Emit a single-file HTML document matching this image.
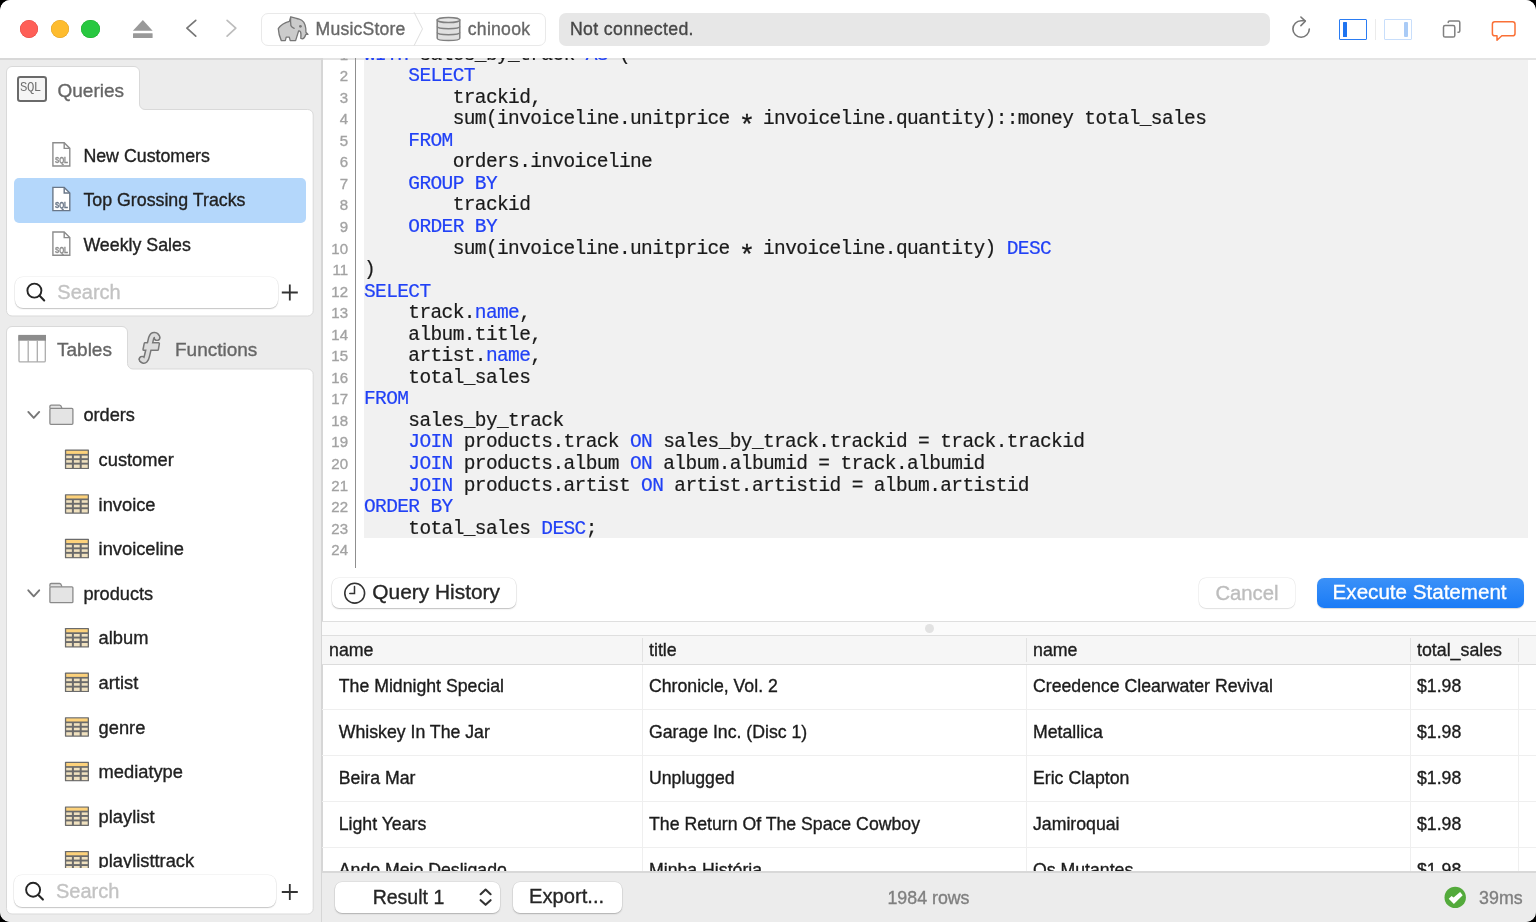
<!DOCTYPE html>
<html><head><meta charset="utf-8">
<style>
*{margin:0;padding:0;box-sizing:border-box}
html,body{width:1536px;height:922px;overflow:hidden;background:#000}
body{font-family:"Liberation Sans",sans-serif;position:relative}
.a{position:absolute}
svg.a{overflow:visible}
#win{position:absolute;left:0;top:0;width:1536px;height:922px;background:#fff;border-radius:10.5px;overflow:hidden;will-change:transform}
.t{position:absolute;white-space:nowrap;line-height:30px;height:30px;-webkit-text-stroke:0.35px currentColor}
.m{position:absolute;white-space:pre;line-height:30px;height:30px;font-family:"Liberation Mono",monospace;-webkit-text-stroke:0.2px currentColor}
.kw{color:#2141f6}
.ast{display:inline-block;transform:translateY(7.5px) scale(1.4)}
</style></head><body>
<div id="win">
<div class="a" style="left:0px;top:0px;width:1536px;height:58px;background:#fff"></div>
<div class="a" style="left:0px;top:58px;width:322px;height:2px;background:#d8d8d8"></div>
<div class="a" style="left:322px;top:58px;width:1214px;height:2px;background:#e6e6e6"></div>
<div class="a" style="left:20.10px;top:19.80px;width:18.4px;height:18.4px;border-radius:50%;background:#fe5f57;box-shadow:inset 0 0 0 0.5px #e14640"></div>
<div class="a" style="left:50.80px;top:19.80px;width:18.4px;height:18.4px;border-radius:50%;background:#febc2e;box-shadow:inset 0 0 0 0.5px #dfa023"></div>
<div class="a" style="left:81.40px;top:19.80px;width:18.4px;height:18.4px;border-radius:50%;background:#28c840;box-shadow:inset 0 0 0 0.5px #1aab29"></div>
<svg class="a" style="left:128px;top:15px" width="30" height="30" viewBox="128 15 30 30"><path d="M142.85 20 L152.6 30.7 L132.9 30.7 Z" fill="#999"/><rect x="133" y="33.3" width="19.6" height="4.8" rx="0.5" fill="#999"/></svg>
<svg class="a" style="left:180px;top:15px" width="60" height="30" viewBox="180 15 60 30"><path d="M195.75 20.3 L186.9 28.2 L195.75 36.2" fill="none" stroke="#777" stroke-width="1.7" stroke-linecap="round" stroke-linejoin="round"/><path d="M227.1 20.3 L235.8 28.2 L227.1 36.2" fill="none" stroke="#bdbdbd" stroke-width="1.7" stroke-linecap="round" stroke-linejoin="round"/></svg>
<div class="a" style="left:261px;top:12.5px;width:285px;height:33.0px;border:1px solid #e9e9e9;border-radius:7px;background:#fff"></div>
<svg class="a" style="left:270px;top:10px" width="45" height="35" viewBox="270 10 45 35"><path d="M278.3 28.6 C280.5 25.2 285 22.6 289.4 21.4 L290.7 16.9 C294 17.6 296.5 18.6 299.2 19.2 C303 20.2 305.2 24 305.8 28.5 L305.9 32.2 L308 34.4 L305.9 34.2 C305.2 36.3 304.2 38.3 302.6 38.8 L300.8 38.3 C301.1 35.6 301.2 33.2 300.4 31.6 C299.9 31 299.2 30.9 298.6 31 L295.6 40.6 L290.2 40.6 L289.3 37.2 L286.2 37.2 L285.3 40.6 L281.3 40.6 C279.6 37 278.5 33 278.3 28.6 Z" fill="#cbcbcb" stroke="#777" stroke-width="1.3" stroke-linejoin="round"/><path d="M290.7 17.2 C290.3 20.5 290.6 23.5 290.9 25.6 C291.5 26.8 292.8 27.8 294.2 28.3" fill="none" stroke="#777" stroke-width="1.3" stroke-linecap="round"/><circle cx="300.4" cy="26.3" r="1.35" fill="#777"/></svg>
<div class="t " style="left:315.60px;top:14.10px;font-size:17.6px;color:#686868;letter-spacing:0.186px;">MusicStore</div>
<svg class="a" style="left:410px;top:10px" width="20" height="40" viewBox="410 10 20 40"><path d="M414.1 12.3 L422.5 28.9 L414.1 45.6" fill="none" stroke="#dedede" stroke-width="1"/></svg>
<svg class="a" style="left:430px;top:12px" width="36" height="34" viewBox="430 12 36 34"><path d="M437.2 20 L437.2 38.2 C437.2 41.2 459.8 41.2 459.8 38.2 L459.8 20 Z" fill="#e0e0e0" stroke="#808080" stroke-width="1.5"/><ellipse cx="448.5" cy="20" rx="11.3" ry="2.6" fill="#e6e6e6" stroke="#808080" stroke-width="1.5"/><path d="M437.2 26.6 C437.2 29.4 459.8 29.4 459.8 26.6" fill="none" stroke="#808080" stroke-width="1.5"/><path d="M437.2 32.6 C437.2 35.4 459.8 35.4 459.8 32.6" fill="none" stroke="#808080" stroke-width="1.5"/></svg>
<div class="t " style="left:467.80px;top:14.10px;font-size:17.6px;color:#686868;letter-spacing:0.256px;">chinook</div>
<div class="a" style="left:559px;top:12.5px;width:711px;height:33.0px;background:#e7e7e7;border-radius:7px"></div>
<div class="t " style="left:570.00px;top:14.07px;font-size:17.7px;color:#474747;letter-spacing:0.349px;">Not connected.</div>
<svg class="a" style="left:1288px;top:14px" width="26" height="26" viewBox="1288 14 26 26"><path d="M1309.3 29 A8.2 8.2 0 1 1 1301.1 20.8 L1305 20.8" fill="none" stroke="#777" stroke-width="1.6" stroke-linecap="round"/><path d="M1300.9 17 L1305.3 21.2 L1300.9 25.6" fill="none" stroke="#777" stroke-width="1.6" stroke-linecap="round" stroke-linejoin="round"/></svg>
<div class="a" style="left:1339.2px;top:18.6px;width:27.799999999999955px;height:21.299999999999997px;border:1.8px solid #2a7cf3;border-radius:1px"></div>
<div class="a" style="left:1342.9px;top:21.7px;width:4.099999999999909px;height:15.000000000000004px;background:#1f74f0;border-radius:0.5px"></div>
<div class="a" style="left:1375px;top:18.5px;width:1px;height:21.5px;background:#ebebeb"></div>
<div class="a" style="left:1384.2px;top:18.6px;width:27.5px;height:21.299999999999997px;border:1.8px solid #c8defb;border-radius:1px"></div>
<div class="a" style="left:1404.2px;top:21.7px;width:4.0px;height:15.000000000000004px;background:#aacbf6;border-radius:1px"></div>
<svg class="a" style="left:1438px;top:16px" width="28" height="26" viewBox="1438 16 28 26"><rect x="1443.5" y="25.6" width="11.3" height="11.4" rx="1.6" fill="none" stroke="#808080" stroke-width="1.5"/><path d="M1448.2 22.4 L1448.2 22.2 C1448.2 21.4 1448.8 21 1449.6 21 L1458.4 21 C1459.3 21 1459.8 21.5 1459.8 22.4 L1459.8 31 C1459.8 31.8 1459.3 32.3 1458.4 32.3 L1458 32.3" fill="none" stroke="#808080" stroke-width="1.5" stroke-linecap="round"/></svg>
<svg class="a" style="left:1488px;top:16px" width="32" height="28" viewBox="1488 16 32 28"><path d="M1494.8 21.8 L1512.6 21.8 C1514 21.8 1515 22.8 1515 24.2 L1515 33.4 C1515 34.8 1514 35.8 1512.6 35.8 L1501.8 35.8 L1497 40.2 L1497 35.8 L1494.8 35.8 C1493.4 35.8 1492.4 34.8 1492.4 33.4 L1492.4 24.2 C1492.4 22.8 1493.4 21.8 1494.8 21.8 Z" fill="none" stroke="#fa7036" stroke-width="1.5" stroke-linejoin="round"/></svg>
<div class="a" style="left:0px;top:60px;width:321px;height:862px;background:#ececec"></div>
<div class="a" style="left:321px;top:58px;width:1.6000000000000227px;height:864px;background:#d6d6d6"></div>
<svg class="a" style="left:0px;top:64px" width="322" height="253" viewBox="0 64 322 253"><path d="M6.5 72.0 A5.5 5.5 0 0 1 12.0 66.5 L134.0 66.5 A5.5 5.5 0 0 1 139.5 72.0 L139.5 104.0 A5.5 5.5 0 0 0 145.0 109.5 L307.7 109.5 A5.5 5.5 0 0 1 313.2 115.0 L313.2 310.5 A5.5 5.5 0 0 1 307.7 316 L12.0 316 A5.5 5.5 0 0 1 6.5 310.5 Z" fill="#fff" stroke="#d9d9d9" stroke-width="1"/></svg>
<div class="a" style="left:17.2px;top:75.8px;width:30.000000000000004px;height:26.400000000000006px;border:2.2px solid #6a6a6a;border-radius:3.2px;background:#f5f5f5"></div>
<div class="a" style="left:20px;top:81px;width:22px;height:14px;font-family:'Liberation Mono',monospace;font-size:13px;line-height:14px;color:#707070;transform:scaleX(0.95);transform-origin:left top;letter-spacing:-0.5px">SQL</div>
<div class="t " style="left:57.50px;top:75.92px;font-size:19px;color:#666;">Queries</div>
<div class="a" style="left:13.8px;top:178px;width:292.09999999999997px;height:44.599999999999994px;background:#b4d7fb;border-radius:5px"></div>
<svg class="a" style="left:48px;top:139px" width="26" height="30" viewBox="48 139 26 30"><path d="M52.9 142.79999999999998 L64.2 142.79999999999998 L69.8 148.39999999999998 L69.8 166.0 L52.9 166.0 Z" fill="#fff" stroke="#8c8c8c" stroke-width="1.4"/><path d="M64.2 142.79999999999998 L64.2 148.39999999999998 L69.8 148.39999999999998" fill="none" stroke="#8c8c8c" stroke-width="1.4"/></svg>
<div class="a" style="left:55px;top:156.40px;width:16px;height:8px;font-family:'Liberation Sans',sans-serif;font-weight:bold;font-size:8.6px;line-height:8px;color:#8c8c8c;transform:scaleX(0.74);transform-origin:left top;letter-spacing:-0.1px;-webkit-text-stroke:0.35px #8c8c8c">SQL</div>
<div class="t " style="left:83.40px;top:140.83px;font-size:17.8px;color:#222;">New Customers</div>
<svg class="a" style="left:48px;top:183px" width="26" height="30" viewBox="48 183 26 30"><path d="M52.9 187.39999999999998 L64.2 187.39999999999998 L69.8 192.99999999999997 L69.8 210.6 L52.9 210.6 Z" fill="#fff" stroke="#6a7788" stroke-width="1.4"/><path d="M64.2 187.39999999999998 L64.2 192.99999999999997 L69.8 192.99999999999997" fill="none" stroke="#6a7788" stroke-width="1.4"/></svg>
<div class="a" style="left:55px;top:201.00px;width:16px;height:8px;font-family:'Liberation Sans',sans-serif;font-weight:bold;font-size:8.6px;line-height:8px;color:#6a7788;transform:scaleX(0.74);transform-origin:left top;letter-spacing:-0.1px;-webkit-text-stroke:0.35px #6a7788">SQL</div>
<div class="t " style="left:83.40px;top:185.43px;font-size:17.8px;color:#222;">Top Grossing Tracks</div>
<svg class="a" style="left:48px;top:228px" width="26" height="30" viewBox="48 228 26 30"><path d="M52.9 231.99999999999997 L64.2 231.99999999999997 L69.8 237.59999999999997 L69.8 255.2 L52.9 255.2 Z" fill="#fff" stroke="#8c8c8c" stroke-width="1.4"/><path d="M64.2 231.99999999999997 L64.2 237.59999999999997 L69.8 237.59999999999997" fill="none" stroke="#8c8c8c" stroke-width="1.4"/></svg>
<div class="a" style="left:55px;top:245.60px;width:16px;height:8px;font-family:'Liberation Sans',sans-serif;font-weight:bold;font-size:8.6px;line-height:8px;color:#8c8c8c;transform:scaleX(0.74);transform-origin:left top;letter-spacing:-0.1px;-webkit-text-stroke:0.35px #8c8c8c">SQL</div>
<div class="t " style="left:83.40px;top:230.03px;font-size:17.8px;color:#222;">Weekly Sales</div>
<div class="a" style="left:15px;top:276.5px;width:263px;height:31.600000000000023px;background:#fff;border-radius:8px;box-shadow:0 0 0 0.5px rgba(0,0,0,0.08),0 1px 1.2px rgba(0,0,0,0.2)"></div>
<svg class="a" style="left:20px;top:279px" width="30" height="26" viewBox="20 279 30 26"><circle cx="34.40" cy="290.60" r="7" fill="none" stroke="#262626" stroke-width="1.9"/><path d="M39.40 295.60 L44.20 300.40" stroke="#262626" stroke-width="2.1" stroke-linecap="round"/></svg>
<div class="t " style="left:57.30px;top:276.67px;font-size:20px;color:#c3c3c3;">Search</div>
<svg class="a" style="left:278px;top:280px" width="24" height="24" viewBox="278 280 24 24"><path d="M289.8 284.5 L289.8 300.5 M281.8 292.5 L297.8 292.5" stroke="#333" stroke-width="1.8"/></svg>
<svg class="a" style="left:0px;top:324px" width="322" height="591" viewBox="0 324 322 591"><path d="M6.5 332.0 A5.5 5.5 0 0 1 12.0 326.5 L122.0 326.5 A5.5 5.5 0 0 1 127.5 332.0 L127.5 363.5 A5.5 5.5 0 0 0 133.0 369 L307.7 369 A5.5 5.5 0 0 1 313.2 374.5 L313.2 908.5 A5.5 5.5 0 0 1 307.7 914 L12.0 914 A5.5 5.5 0 0 1 6.5 908.5 Z" fill="#fff" stroke="#d9d9d9" stroke-width="1"/></svg>
<svg class="a" style="left:14px;top:330px" width="36" height="36" viewBox="14 330 36 36"><rect x="19" y="335.6" width="26.3" height="26.3" rx="1.2" fill="#fff" stroke="#acacac" stroke-width="1.3"/><rect x="18.3" y="334.9" width="27.7" height="5.8" fill="#8c8c8c"/><path d="M28.2 340.6 L28.2 362 M37.3 340.6 L37.3 362" stroke="#acacac" stroke-width="1.3"/></svg>
<div class="t " style="left:57.00px;top:334.72px;font-size:19px;color:#666;">Tables</div>
<svg class="a" style="left:132px;top:326px" width="34" height="42" viewBox="132 326 34 42"><g fill="#777" stroke="#777"><path d="M157 337.6 C156.6 334.6 152.6 333.6 151.2 338 L147 355.8 C146.2 359.6 144.4 362.6 141.9 359.4" fill="none" stroke-width="6.6" stroke-linecap="round"/><circle cx="157" cy="337.6" r="3.5" stroke="none"/><circle cx="142.2" cy="359.2" r="3.5" stroke="none"/><path d="M145 343.6 L158.6 343.6 L157.6 349.4 L143.8 349.4 Z" stroke-width="3" stroke-linejoin="round"/></g><g fill="#dcdcdc" stroke="#dcdcdc"><path d="M157 337.6 C156.6 334.6 152.6 333.6 151.2 338 L147 355.8 C146.2 359.6 144.4 362.6 141.9 359.4" fill="none" stroke-width="3.6" stroke-linecap="round"/><circle cx="157" cy="337.6" r="2" stroke="none"/><circle cx="142.2" cy="359.2" r="2" stroke="none"/><path d="M145 343.6 L158.6 343.6 L157.6 349.4 L143.8 349.4 Z" stroke-width="0.1"/></g></svg>
<div class="t " style="left:175.00px;top:334.72px;font-size:19px;color:#666;">Functions</div>
<div class="a" style="left:0;top:0;width:321px;height:868px;overflow:hidden">
<svg class="a" style="left:22px;top:404px" width="24" height="20" viewBox="22 404 24 20"><path d="M28.3 411.90 L33.75 417.90 L39.2 411.90" fill="none" stroke="#777" stroke-width="1.9" stroke-linecap="round" stroke-linejoin="round"/></svg>
<svg class="a" style="left:44px;top:401px" width="36" height="28" viewBox="44 401 36 28"><path d="M49.9 408.40 L49.9 406.30 C49.9 405.50 50.4 405.10 51.2 405.10 L59.6 405.10 C60.6 405.10 61.2 405.70 61.6 407.50 L61.8 408.40" fill="#e4e4e4" stroke="#8a8a8a" stroke-width="1.3"/><rect x="49.9" y="408.40" width="23" height="15.9" rx="1" fill="#e4e4e4" stroke="#8a8a8a" stroke-width="1.3"/></svg>
<div class="t " style="left:83.40px;top:400.39px;font-size:18.2px;color:#222;">orders</div>
<svg class="a" style="left:60px;top:446px" width="32" height="26" viewBox="60 446 32 26"><rect x="64.90" y="449.60" width="24.1" height="19.5" rx="0.6" fill="#6b6b6b"/><rect x="66.20" y="450.80" width="21.5" height="3.1" fill="#fdd27b"/><rect x="66.20" y="455.60" width="5.70" height="2.60" fill="#f0e1bf"/><rect x="66.20" y="460.10" width="5.70" height="2.60" fill="#f0e1bf"/><rect x="66.20" y="464.60" width="5.70" height="3.30" fill="#f0e1bf"/><rect x="73.90" y="455.60" width="5.80" height="2.60" fill="#f0e1bf"/><rect x="73.90" y="460.10" width="5.80" height="2.60" fill="#f0e1bf"/><rect x="73.90" y="464.60" width="5.80" height="3.30" fill="#f0e1bf"/><rect x="81.70" y="455.60" width="6.00" height="2.60" fill="#f0e1bf"/><rect x="81.70" y="460.10" width="6.00" height="2.60" fill="#f0e1bf"/><rect x="81.70" y="464.60" width="6.00" height="3.30" fill="#f0e1bf"/></svg>
<div class="t " style="left:98.60px;top:444.96px;font-size:18.3px;color:#222;">customer</div>
<svg class="a" style="left:60px;top:491px" width="32" height="26" viewBox="60 491 32 26"><rect x="64.90" y="494.20" width="24.1" height="19.5" rx="0.6" fill="#6b6b6b"/><rect x="66.20" y="495.40" width="21.5" height="3.1" fill="#fdd27b"/><rect x="66.20" y="500.20" width="5.70" height="2.60" fill="#f0e1bf"/><rect x="66.20" y="504.70" width="5.70" height="2.60" fill="#f0e1bf"/><rect x="66.20" y="509.20" width="5.70" height="3.30" fill="#f0e1bf"/><rect x="73.90" y="500.20" width="5.80" height="2.60" fill="#f0e1bf"/><rect x="73.90" y="504.70" width="5.80" height="2.60" fill="#f0e1bf"/><rect x="73.90" y="509.20" width="5.80" height="3.30" fill="#f0e1bf"/><rect x="81.70" y="500.20" width="6.00" height="2.60" fill="#f0e1bf"/><rect x="81.70" y="504.70" width="6.00" height="2.60" fill="#f0e1bf"/><rect x="81.70" y="509.20" width="6.00" height="3.30" fill="#f0e1bf"/></svg>
<div class="t " style="left:98.60px;top:489.56px;font-size:18.3px;color:#222;">invoice</div>
<svg class="a" style="left:60px;top:535px" width="32" height="26" viewBox="60 535 32 26"><rect x="64.90" y="538.80" width="24.1" height="19.5" rx="0.6" fill="#6b6b6b"/><rect x="66.20" y="540.00" width="21.5" height="3.1" fill="#fdd27b"/><rect x="66.20" y="544.80" width="5.70" height="2.60" fill="#f0e1bf"/><rect x="66.20" y="549.30" width="5.70" height="2.60" fill="#f0e1bf"/><rect x="66.20" y="553.80" width="5.70" height="3.30" fill="#f0e1bf"/><rect x="73.90" y="544.80" width="5.80" height="2.60" fill="#f0e1bf"/><rect x="73.90" y="549.30" width="5.80" height="2.60" fill="#f0e1bf"/><rect x="73.90" y="553.80" width="5.80" height="3.30" fill="#f0e1bf"/><rect x="81.70" y="544.80" width="6.00" height="2.60" fill="#f0e1bf"/><rect x="81.70" y="549.30" width="6.00" height="2.60" fill="#f0e1bf"/><rect x="81.70" y="553.80" width="6.00" height="3.30" fill="#f0e1bf"/></svg>
<div class="t " style="left:98.60px;top:534.16px;font-size:18.3px;color:#222;">invoiceline</div>
<svg class="a" style="left:22px;top:583px" width="24" height="20" viewBox="22 583 24 20"><path d="M28.3 590.30 L33.75 596.30 L39.2 590.30" fill="none" stroke="#777" stroke-width="1.9" stroke-linecap="round" stroke-linejoin="round"/></svg>
<svg class="a" style="left:44px;top:579px" width="36" height="28" viewBox="44 579 36 28"><path d="M49.9 586.80 L49.9 584.70 C49.9 583.90 50.4 583.50 51.2 583.50 L59.6 583.50 C60.6 583.50 61.2 584.10 61.6 585.90 L61.8 586.80" fill="#e4e4e4" stroke="#8a8a8a" stroke-width="1.3"/><rect x="49.9" y="586.80" width="23" height="15.9" rx="1" fill="#e4e4e4" stroke="#8a8a8a" stroke-width="1.3"/></svg>
<div class="t " style="left:83.40px;top:578.79px;font-size:18.2px;color:#222;">products</div>
<svg class="a" style="left:60px;top:625px" width="32" height="26" viewBox="60 625 32 26"><rect x="64.90" y="628.00" width="24.1" height="19.5" rx="0.6" fill="#6b6b6b"/><rect x="66.20" y="629.20" width="21.5" height="3.1" fill="#fdd27b"/><rect x="66.20" y="634.00" width="5.70" height="2.60" fill="#f0e1bf"/><rect x="66.20" y="638.50" width="5.70" height="2.60" fill="#f0e1bf"/><rect x="66.20" y="643.00" width="5.70" height="3.30" fill="#f0e1bf"/><rect x="73.90" y="634.00" width="5.80" height="2.60" fill="#f0e1bf"/><rect x="73.90" y="638.50" width="5.80" height="2.60" fill="#f0e1bf"/><rect x="73.90" y="643.00" width="5.80" height="3.30" fill="#f0e1bf"/><rect x="81.70" y="634.00" width="6.00" height="2.60" fill="#f0e1bf"/><rect x="81.70" y="638.50" width="6.00" height="2.60" fill="#f0e1bf"/><rect x="81.70" y="643.00" width="6.00" height="3.30" fill="#f0e1bf"/></svg>
<div class="t " style="left:98.60px;top:623.36px;font-size:18.3px;color:#222;">album</div>
<svg class="a" style="left:60px;top:669px" width="32" height="26" viewBox="60 669 32 26"><rect x="64.90" y="672.60" width="24.1" height="19.5" rx="0.6" fill="#6b6b6b"/><rect x="66.20" y="673.80" width="21.5" height="3.1" fill="#fdd27b"/><rect x="66.20" y="678.60" width="5.70" height="2.60" fill="#f0e1bf"/><rect x="66.20" y="683.10" width="5.70" height="2.60" fill="#f0e1bf"/><rect x="66.20" y="687.60" width="5.70" height="3.30" fill="#f0e1bf"/><rect x="73.90" y="678.60" width="5.80" height="2.60" fill="#f0e1bf"/><rect x="73.90" y="683.10" width="5.80" height="2.60" fill="#f0e1bf"/><rect x="73.90" y="687.60" width="5.80" height="3.30" fill="#f0e1bf"/><rect x="81.70" y="678.60" width="6.00" height="2.60" fill="#f0e1bf"/><rect x="81.70" y="683.10" width="6.00" height="2.60" fill="#f0e1bf"/><rect x="81.70" y="687.60" width="6.00" height="3.30" fill="#f0e1bf"/></svg>
<div class="t " style="left:98.60px;top:667.96px;font-size:18.3px;color:#222;">artist</div>
<svg class="a" style="left:60px;top:714px" width="32" height="26" viewBox="60 714 32 26"><rect x="64.90" y="717.20" width="24.1" height="19.5" rx="0.6" fill="#6b6b6b"/><rect x="66.20" y="718.40" width="21.5" height="3.1" fill="#fdd27b"/><rect x="66.20" y="723.20" width="5.70" height="2.60" fill="#f0e1bf"/><rect x="66.20" y="727.70" width="5.70" height="2.60" fill="#f0e1bf"/><rect x="66.20" y="732.20" width="5.70" height="3.30" fill="#f0e1bf"/><rect x="73.90" y="723.20" width="5.80" height="2.60" fill="#f0e1bf"/><rect x="73.90" y="727.70" width="5.80" height="2.60" fill="#f0e1bf"/><rect x="73.90" y="732.20" width="5.80" height="3.30" fill="#f0e1bf"/><rect x="81.70" y="723.20" width="6.00" height="2.60" fill="#f0e1bf"/><rect x="81.70" y="727.70" width="6.00" height="2.60" fill="#f0e1bf"/><rect x="81.70" y="732.20" width="6.00" height="3.30" fill="#f0e1bf"/></svg>
<div class="t " style="left:98.60px;top:712.56px;font-size:18.3px;color:#222;">genre</div>
<svg class="a" style="left:60px;top:758px" width="32" height="26" viewBox="60 758 32 26"><rect x="64.90" y="761.80" width="24.1" height="19.5" rx="0.6" fill="#6b6b6b"/><rect x="66.20" y="763.00" width="21.5" height="3.1" fill="#fdd27b"/><rect x="66.20" y="767.80" width="5.70" height="2.60" fill="#f0e1bf"/><rect x="66.20" y="772.30" width="5.70" height="2.60" fill="#f0e1bf"/><rect x="66.20" y="776.80" width="5.70" height="3.30" fill="#f0e1bf"/><rect x="73.90" y="767.80" width="5.80" height="2.60" fill="#f0e1bf"/><rect x="73.90" y="772.30" width="5.80" height="2.60" fill="#f0e1bf"/><rect x="73.90" y="776.80" width="5.80" height="3.30" fill="#f0e1bf"/><rect x="81.70" y="767.80" width="6.00" height="2.60" fill="#f0e1bf"/><rect x="81.70" y="772.30" width="6.00" height="2.60" fill="#f0e1bf"/><rect x="81.70" y="776.80" width="6.00" height="3.30" fill="#f0e1bf"/></svg>
<div class="t " style="left:98.60px;top:757.16px;font-size:18.3px;color:#222;">mediatype</div>
<svg class="a" style="left:60px;top:803px" width="32" height="26" viewBox="60 803 32 26"><rect x="64.90" y="806.40" width="24.1" height="19.5" rx="0.6" fill="#6b6b6b"/><rect x="66.20" y="807.60" width="21.5" height="3.1" fill="#fdd27b"/><rect x="66.20" y="812.40" width="5.70" height="2.60" fill="#f0e1bf"/><rect x="66.20" y="816.90" width="5.70" height="2.60" fill="#f0e1bf"/><rect x="66.20" y="821.40" width="5.70" height="3.30" fill="#f0e1bf"/><rect x="73.90" y="812.40" width="5.80" height="2.60" fill="#f0e1bf"/><rect x="73.90" y="816.90" width="5.80" height="2.60" fill="#f0e1bf"/><rect x="73.90" y="821.40" width="5.80" height="3.30" fill="#f0e1bf"/><rect x="81.70" y="812.40" width="6.00" height="2.60" fill="#f0e1bf"/><rect x="81.70" y="816.90" width="6.00" height="2.60" fill="#f0e1bf"/><rect x="81.70" y="821.40" width="6.00" height="3.30" fill="#f0e1bf"/></svg>
<div class="t " style="left:98.60px;top:801.76px;font-size:18.3px;color:#222;">playlist</div>
<svg class="a" style="left:60px;top:848px" width="32" height="26" viewBox="60 848 32 26"><rect x="64.90" y="851.00" width="24.1" height="19.5" rx="0.6" fill="#6b6b6b"/><rect x="66.20" y="852.20" width="21.5" height="3.1" fill="#fdd27b"/><rect x="66.20" y="857.00" width="5.70" height="2.60" fill="#f0e1bf"/><rect x="66.20" y="861.50" width="5.70" height="2.60" fill="#f0e1bf"/><rect x="66.20" y="866.00" width="5.70" height="3.30" fill="#f0e1bf"/><rect x="73.90" y="857.00" width="5.80" height="2.60" fill="#f0e1bf"/><rect x="73.90" y="861.50" width="5.80" height="2.60" fill="#f0e1bf"/><rect x="73.90" y="866.00" width="5.80" height="3.30" fill="#f0e1bf"/><rect x="81.70" y="857.00" width="6.00" height="2.60" fill="#f0e1bf"/><rect x="81.70" y="861.50" width="6.00" height="2.60" fill="#f0e1bf"/><rect x="81.70" y="866.00" width="6.00" height="3.30" fill="#f0e1bf"/></svg>
<div class="t " style="left:98.60px;top:846.36px;font-size:18.3px;color:#222;">playlisttrack</div>
</div>
<div class="a" style="left:13.7px;top:875.4px;width:262.3px;height:32.10000000000002px;background:#fff;border-radius:8px;box-shadow:0 0 0 0.5px rgba(0,0,0,0.08),0 1px 1.2px rgba(0,0,0,0.2)"></div>
<svg class="a" style="left:18px;top:878px" width="30" height="26" viewBox="18 878 30 26"><circle cx="33.10" cy="889.75" r="7" fill="none" stroke="#262626" stroke-width="1.9"/><path d="M38.10 894.75 L42.90 899.55" stroke="#262626" stroke-width="2.1" stroke-linecap="round"/></svg>
<div class="t " style="left:56.00px;top:875.82px;font-size:20px;color:#c3c3c3;">Search</div>
<svg class="a" style="left:276px;top:880px" width="24" height="24" viewBox="276 880 24 24"><path d="M289.8 884 L289.8 900 M281.8 892 L297.8 892" stroke="#333" stroke-width="1.8"/></svg>
<div class="a" style="left:322.6px;top:60px;width:1213.4px;height:811px;background:#fff"></div>
<div class="a" style="left:322.6px;top:58px;width:1213.4px;height:2px;background:#e4e4e4"></div>
<div class="a" style="left:354.6px;top:58px;width:1.1999999999999886px;height:510px;background:#8f8f8f"></div>
<div class="a" style="left:364px;top:60px;width:1164px;height:477.79999999999995px;background:#f1f1f1"></div>
<div class="a" style="left:0;top:58px;width:1536px;height:513px;overflow:hidden"><div class="a" style="left:0;top:-58px;width:1536px;height:922px">
<div class="m" style="left:364.00px;top:39.56px;font-size:19.5px;letter-spacing:-0.62px;color:#1a1a1a"><span class="kw">WITH</span> sales_by_track <span class="kw">AS</span> (</div>
<div class="t" style="left:300px;width:48px;text-align:right;top:39.55px;font-size:15px;color:#a3a3a3">1</div>
<div class="m" style="left:364.00px;top:61.11px;font-size:19.5px;letter-spacing:-0.62px;color:#1a1a1a">    <span class="kw">SELECT</span></div>
<div class="t" style="left:300px;width:48px;text-align:right;top:61.10px;font-size:15px;color:#a3a3a3">2</div>
<div class="m" style="left:364.00px;top:82.66px;font-size:19.5px;letter-spacing:-0.62px;color:#1a1a1a">        trackid,</div>
<div class="t" style="left:300px;width:48px;text-align:right;top:82.65px;font-size:15px;color:#a3a3a3">3</div>
<div class="m" style="left:364.00px;top:104.21px;font-size:19.5px;letter-spacing:-0.62px;color:#1a1a1a">        sum(invoiceline.unitprice <span class="ast">*</span> invoiceline.quantity)::money total_sales</div>
<div class="t" style="left:300px;width:48px;text-align:right;top:104.20px;font-size:15px;color:#a3a3a3">4</div>
<div class="m" style="left:364.00px;top:125.76px;font-size:19.5px;letter-spacing:-0.62px;color:#1a1a1a">    <span class="kw">FROM</span></div>
<div class="t" style="left:300px;width:48px;text-align:right;top:125.75px;font-size:15px;color:#a3a3a3">5</div>
<div class="m" style="left:364.00px;top:147.31px;font-size:19.5px;letter-spacing:-0.62px;color:#1a1a1a">        orders.invoiceline</div>
<div class="t" style="left:300px;width:48px;text-align:right;top:147.30px;font-size:15px;color:#a3a3a3">6</div>
<div class="m" style="left:364.00px;top:168.86px;font-size:19.5px;letter-spacing:-0.62px;color:#1a1a1a">    <span class="kw">GROUP</span> <span class="kw">BY</span></div>
<div class="t" style="left:300px;width:48px;text-align:right;top:168.85px;font-size:15px;color:#a3a3a3">7</div>
<div class="m" style="left:364.00px;top:190.41px;font-size:19.5px;letter-spacing:-0.62px;color:#1a1a1a">        trackid</div>
<div class="t" style="left:300px;width:48px;text-align:right;top:190.40px;font-size:15px;color:#a3a3a3">8</div>
<div class="m" style="left:364.00px;top:211.96px;font-size:19.5px;letter-spacing:-0.62px;color:#1a1a1a">    <span class="kw">ORDER</span> <span class="kw">BY</span></div>
<div class="t" style="left:300px;width:48px;text-align:right;top:211.95px;font-size:15px;color:#a3a3a3">9</div>
<div class="m" style="left:364.00px;top:233.51px;font-size:19.5px;letter-spacing:-0.62px;color:#1a1a1a">        sum(invoiceline.unitprice <span class="ast">*</span> invoiceline.quantity) <span class="kw">DESC</span></div>
<div class="t" style="left:300px;width:48px;text-align:right;top:233.50px;font-size:15px;color:#a3a3a3">10</div>
<div class="m" style="left:364.00px;top:255.06px;font-size:19.5px;letter-spacing:-0.62px;color:#1a1a1a">)</div>
<div class="t" style="left:300px;width:48px;text-align:right;top:255.05px;font-size:15px;color:#a3a3a3">11</div>
<div class="m" style="left:364.00px;top:276.61px;font-size:19.5px;letter-spacing:-0.62px;color:#1a1a1a"><span class="kw">SELECT</span></div>
<div class="t" style="left:300px;width:48px;text-align:right;top:276.60px;font-size:15px;color:#a3a3a3">12</div>
<div class="m" style="left:364.00px;top:298.16px;font-size:19.5px;letter-spacing:-0.62px;color:#1a1a1a">    track.<span class="kw">name</span>,</div>
<div class="t" style="left:300px;width:48px;text-align:right;top:298.15px;font-size:15px;color:#a3a3a3">13</div>
<div class="m" style="left:364.00px;top:319.71px;font-size:19.5px;letter-spacing:-0.62px;color:#1a1a1a">    album.title,</div>
<div class="t" style="left:300px;width:48px;text-align:right;top:319.70px;font-size:15px;color:#a3a3a3">14</div>
<div class="m" style="left:364.00px;top:341.26px;font-size:19.5px;letter-spacing:-0.62px;color:#1a1a1a">    artist.<span class="kw">name</span>,</div>
<div class="t" style="left:300px;width:48px;text-align:right;top:341.25px;font-size:15px;color:#a3a3a3">15</div>
<div class="m" style="left:364.00px;top:362.81px;font-size:19.5px;letter-spacing:-0.62px;color:#1a1a1a">    total_sales</div>
<div class="t" style="left:300px;width:48px;text-align:right;top:362.80px;font-size:15px;color:#a3a3a3">16</div>
<div class="m" style="left:364.00px;top:384.36px;font-size:19.5px;letter-spacing:-0.62px;color:#1a1a1a"><span class="kw">FROM</span></div>
<div class="t" style="left:300px;width:48px;text-align:right;top:384.35px;font-size:15px;color:#a3a3a3">17</div>
<div class="m" style="left:364.00px;top:405.91px;font-size:19.5px;letter-spacing:-0.62px;color:#1a1a1a">    sales_by_track</div>
<div class="t" style="left:300px;width:48px;text-align:right;top:405.90px;font-size:15px;color:#a3a3a3">18</div>
<div class="m" style="left:364.00px;top:427.46px;font-size:19.5px;letter-spacing:-0.62px;color:#1a1a1a">    <span class="kw">JOIN</span> products.track <span class="kw">ON</span> sales_by_track.trackid = track.trackid</div>
<div class="t" style="left:300px;width:48px;text-align:right;top:427.45px;font-size:15px;color:#a3a3a3">19</div>
<div class="m" style="left:364.00px;top:449.01px;font-size:19.5px;letter-spacing:-0.62px;color:#1a1a1a">    <span class="kw">JOIN</span> products.album <span class="kw">ON</span> album.albumid = track.albumid</div>
<div class="t" style="left:300px;width:48px;text-align:right;top:449.00px;font-size:15px;color:#a3a3a3">20</div>
<div class="m" style="left:364.00px;top:470.56px;font-size:19.5px;letter-spacing:-0.62px;color:#1a1a1a">    <span class="kw">JOIN</span> products.artist <span class="kw">ON</span> artist.artistid = album.artistid</div>
<div class="t" style="left:300px;width:48px;text-align:right;top:470.55px;font-size:15px;color:#a3a3a3">21</div>
<div class="m" style="left:364.00px;top:492.11px;font-size:19.5px;letter-spacing:-0.62px;color:#1a1a1a"><span class="kw">ORDER</span> <span class="kw">BY</span></div>
<div class="t" style="left:300px;width:48px;text-align:right;top:492.10px;font-size:15px;color:#a3a3a3">22</div>
<div class="m" style="left:364.00px;top:513.66px;font-size:19.5px;letter-spacing:-0.62px;color:#1a1a1a">    total_sales <span class="kw">DESC</span>;</div>
<div class="t" style="left:300px;width:48px;text-align:right;top:513.65px;font-size:15px;color:#a3a3a3">23</div>
<div class="m" style="left:364.00px;top:535.21px;font-size:19.5px;letter-spacing:-0.62px;color:#1a1a1a"></div>
<div class="t" style="left:300px;width:48px;text-align:right;top:535.20px;font-size:15px;color:#a3a3a3">24</div>
</div></div>
<div class="a" style="left:331.7px;top:578px;width:184.09999999999997px;height:30px;background:#fff;border-radius:7px;box-shadow:0 0 0 0.5px rgba(0,0,0,0.09),0 1px 1.5px rgba(0,0,0,0.22)"></div>
<svg class="a" style="left:340px;top:578px" width="30" height="30" viewBox="340 578 30 30"><circle cx="354.7" cy="593.2" r="9.9" fill="none" stroke="#333" stroke-width="1.6"/><path d="M354.5 586.5 L354.5 593.6 L349.8 593.6" fill="none" stroke="#333" stroke-width="1.5" stroke-linecap="round"/></svg>
<div class="t " style="left:372.30px;top:577.06px;font-size:20.9px;color:#262626;">Query History</div>
<div class="a" style="left:1199.3px;top:578px;width:95.60000000000014px;height:30px;background:#fff;border-radius:7px;box-shadow:0 0 0 0.6px rgba(0,0,0,0.07),0 0.8px 1.2px rgba(0,0,0,0.09)"></div>
<div class="t " style="left:1215.40px;top:577.57px;font-size:20.3px;color:#bdbdbd;">Cancel</div>
<div class="a" style="left:1316.5px;top:577.6px;width:207.0px;height:30.399999999999977px;background:linear-gradient(#3b91f8,#1a7bf6);border-radius:7px;box-shadow:0 0.5px 1px rgba(0,0,0,0.15)"></div>
<div class="t " style="left:1332.60px;top:577.46px;font-size:20.6px;color:#fff;">Execute Statement</div>
<div class="a" style="left:322px;top:621px;width:1214px;height:1px;background:#dfdfdf"></div>
<div class="a" style="left:322px;top:622px;width:1214px;height:13px;background:#fbfbfb"></div>
<div class="a" style="left:924.7px;top:623.8px;width:9.2px;height:9.2px;border-radius:50%;background:#e2e2e2"></div>
<div class="a" style="left:322px;top:635px;width:1214px;height:1px;background:#dfdfdf"></div>
<div class="a" style="left:322px;top:636px;width:1214px;height:28px;background:#f6f6f6"></div>
<div class="a" style="left:322px;top:664px;width:1214px;height:1px;background:#dcdcdc"></div>
<div class="a" style="left:642px;top:638px;width:1px;height:24px;background:#e2e2e2"></div>
<div class="a" style="left:1026px;top:638px;width:1px;height:24px;background:#e2e2e2"></div>
<div class="a" style="left:1410px;top:638px;width:1px;height:24px;background:#e2e2e2"></div>
<div class="a" style="left:1517.5px;top:638px;width:1.0px;height:24px;background:#e2e2e2"></div>
<div class="t " style="left:329.00px;top:635.23px;font-size:17.8px;color:#1e1e1e;">name</div>
<div class="t " style="left:649.00px;top:635.23px;font-size:17.8px;color:#1e1e1e;">title</div>
<div class="t " style="left:1033.00px;top:635.23px;font-size:17.8px;color:#1e1e1e;">name</div>
<div class="t " style="left:1417.00px;top:635.23px;font-size:17.8px;color:#1e1e1e;">total_sales</div>
<div class="a" style="left:0;top:665px;width:1536px;height:206px;overflow:hidden"><div class="a" style="left:0;top:-665px;width:1536px;height:922px">
<div class="a" style="left:322px;top:709px;width:1214px;height:1px;background:#efefef"></div>
<div class="t " style="left:338.75px;top:671.17px;font-size:17.7px;color:#1c1c1c;">The Midnight Special</div>
<div class="t " style="left:649.00px;top:671.17px;font-size:17.7px;color:#1c1c1c;">Chronicle, Vol. 2</div>
<div class="t " style="left:1033.00px;top:671.17px;font-size:17.7px;color:#1c1c1c;">Creedence Clearwater Revival</div>
<div class="t " style="left:1417.00px;top:671.17px;font-size:17.7px;color:#1c1c1c;">$1.98</div>
<div class="a" style="left:322px;top:755px;width:1214px;height:1px;background:#efefef"></div>
<div class="t " style="left:338.75px;top:717.17px;font-size:17.7px;color:#1c1c1c;">Whiskey In The Jar</div>
<div class="t " style="left:649.00px;top:717.17px;font-size:17.7px;color:#1c1c1c;">Garage Inc. (Disc 1)</div>
<div class="t " style="left:1033.00px;top:717.17px;font-size:17.7px;color:#1c1c1c;">Metallica</div>
<div class="t " style="left:1417.00px;top:717.17px;font-size:17.7px;color:#1c1c1c;">$1.98</div>
<div class="a" style="left:322px;top:801px;width:1214px;height:1px;background:#efefef"></div>
<div class="t " style="left:338.75px;top:763.17px;font-size:17.7px;color:#1c1c1c;">Beira Mar</div>
<div class="t " style="left:649.00px;top:763.17px;font-size:17.7px;color:#1c1c1c;">Unplugged</div>
<div class="t " style="left:1033.00px;top:763.17px;font-size:17.7px;color:#1c1c1c;">Eric Clapton</div>
<div class="t " style="left:1417.00px;top:763.17px;font-size:17.7px;color:#1c1c1c;">$1.98</div>
<div class="a" style="left:322px;top:847px;width:1214px;height:1px;background:#efefef"></div>
<div class="t " style="left:338.75px;top:809.17px;font-size:17.7px;color:#1c1c1c;">Light Years</div>
<div class="t " style="left:649.00px;top:809.17px;font-size:17.7px;color:#1c1c1c;">The Return Of The Space Cowboy</div>
<div class="t " style="left:1033.00px;top:809.17px;font-size:17.7px;color:#1c1c1c;">Jamiroquai</div>
<div class="t " style="left:1417.00px;top:809.17px;font-size:17.7px;color:#1c1c1c;">$1.98</div>
<div class="a" style="left:322px;top:893px;width:1214px;height:1px;background:#efefef"></div>
<div class="t " style="left:338.75px;top:855.17px;font-size:17.7px;color:#1c1c1c;">Ando Meio Desligado</div>
<div class="t " style="left:649.00px;top:855.17px;font-size:17.7px;color:#1c1c1c;">Minha Hist&oacute;ria</div>
<div class="t " style="left:1033.00px;top:855.17px;font-size:17.7px;color:#1c1c1c;">Os Mutantes</div>
<div class="t " style="left:1417.00px;top:855.17px;font-size:17.7px;color:#1c1c1c;">$1.98</div>
<div class="a" style="left:642px;top:665px;width:1px;height:206px;background:#efefef"></div>
<div class="a" style="left:1026px;top:665px;width:1px;height:206px;background:#efefef"></div>
<div class="a" style="left:1410px;top:665px;width:1px;height:206px;background:#efefef"></div>
<div class="a" style="left:1517.5px;top:665px;width:1.0px;height:206px;background:#efefef"></div>
</div></div>
<div class="a" style="left:322px;top:871px;width:1214px;height:51px;background:#ececec"></div>
<div class="a" style="left:322px;top:871px;width:1214px;height:2px;background:#d8d8d8"></div>
<div class="a" style="left:334.8px;top:881.7px;width:165.7px;height:31.299999999999955px;background:#fff;border-radius:7px;box-shadow:0 0 0 0.5px rgba(0,0,0,0.09),0 1px 1.5px rgba(0,0,0,0.22)"></div>
<div class="t " style="left:372.70px;top:881.64px;font-size:19.5px;color:#262626;">Result 1</div>
<svg class="a" style="left:474px;top:884px" width="20" height="26" viewBox="474 884 20 26"><path d="M480.6 894.2 L485.6 889.6 L490.6 894.2 M480.6 900.2 L485.6 904.8 L490.6 900.2" fill="none" stroke="#333" stroke-width="2.1" stroke-linecap="round" stroke-linejoin="round"/></svg>
<div class="a" style="left:512.9px;top:881.7px;width:109.0px;height:31.299999999999955px;background:#fff;border-radius:7px;box-shadow:0 0 0 0.5px rgba(0,0,0,0.09),0 1px 1.5px rgba(0,0,0,0.22)"></div>
<div class="t " style="left:529.00px;top:881.40px;font-size:20.2px;color:#262626;">Export...</div>
<div class="t" style="left:628.50px;width:600px;text-align:center;top:882.63px;font-size:17.8px;color:#7f7f7f;">1984 rows</div>
<svg class="a" style="left:1440px;top:882px" width="30" height="30" viewBox="1440 882 30 30"><circle cx="1455.2" cy="897.4" r="10.7" fill="#53aa3b"/><path d="M1448.7 898.8 L1451.6 895.9 L1453.6 897.6 L1460.1 892 L1462.7 895.3 L1453.9 904 Z" fill="#fff"/></svg>
<div class="t " style="left:1479.00px;top:882.83px;font-size:17.8px;color:#7f7f7f;letter-spacing:0.091px;">39ms</div>
</div>
</body></html>
